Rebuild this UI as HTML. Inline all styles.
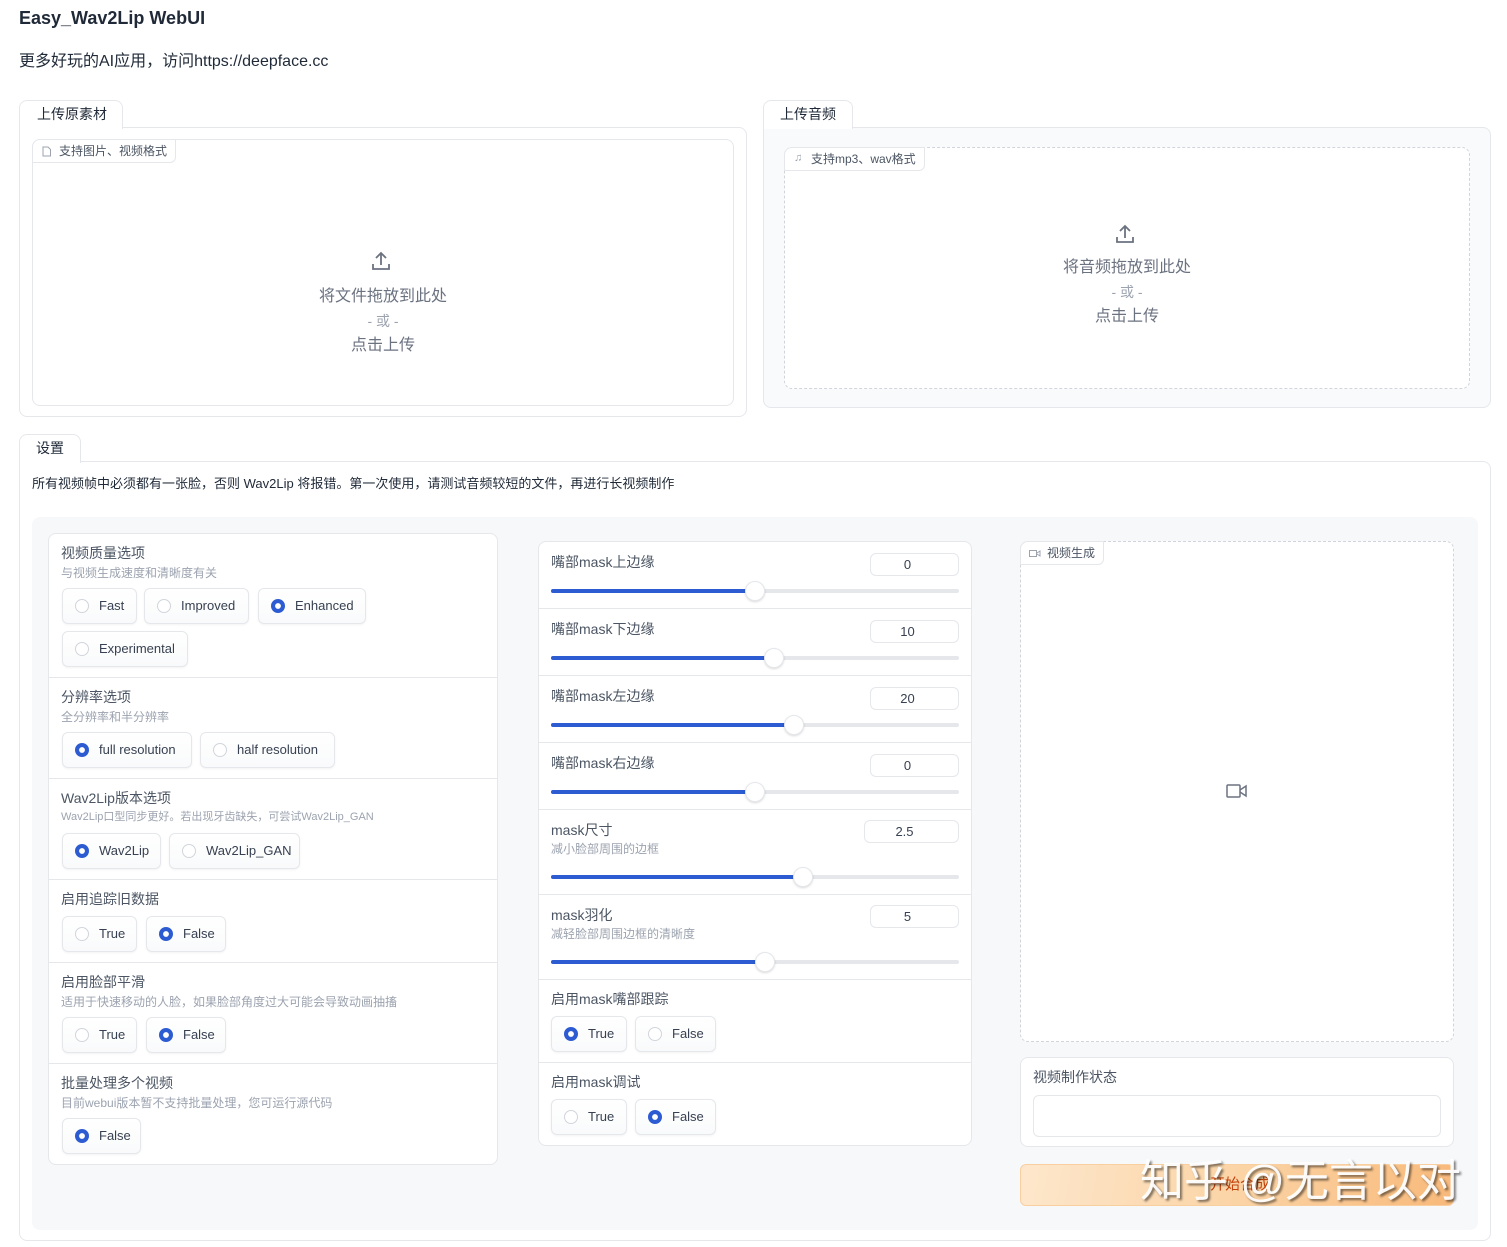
<!DOCTYPE html>
<html><head><meta charset="utf-8"><style>
*{box-sizing:border-box;margin:0;padding:0}
body{width:1507px;height:1247px;background:#fff;position:relative;font-family:"Liberation Sans","Noto Sans CJK SC",sans-serif;color:#374151;overflow:hidden}
.a{position:absolute}
.t{position:absolute;white-space:nowrap;line-height:1}
.box{position:absolute;border:1px solid #e5e7eb;border-radius:8px;background:#fff}
.pill{position:absolute;height:36px;border:1px solid #e5e7eb;border-radius:6px;background:linear-gradient(#fff,#f9fafb);box-shadow:0 1px 2px rgba(0,0,0,.05);font-size:13px;color:#374151;line-height:34px;padding-left:36px;white-space:nowrap}
.pill:before{content:"";position:absolute;left:12px;top:10px;width:14px;height:14px;border-radius:50%;border:1px solid #d1d5db;background:#fff;box-sizing:border-box}
.pill.on:before{background:#2d5bd1;border:4px solid #2d5bd1;box-shadow:inset 0 0 0 3px #fff}
.lab{font-size:14px;color:#4b5563}
.sub{font-size:12px;color:#9ca3af}
.sep{position:absolute;height:1px;background:#e5e7eb}
.num{position:absolute;height:23px;border:1px solid #e5e7eb;border-radius:6px;font-size:13px;text-align:center;line-height:21px;color:#374151;background:#fff;padding-right:14px}
.trk{position:absolute;height:4px;background:#e5e7eb;border-radius:2px}
.fill{position:absolute;left:0;top:0;height:4px;background:#2d5bd1;border-radius:2px}
.th{position:absolute;width:20px;height:20px;border-radius:50%;background:#fff;border:1px solid #e5e7eb;box-shadow:0 1px 2px rgba(0,0,0,.15);top:-8px}
.chip{position:absolute;height:24px;border:1px solid #e5e7eb;border-radius:0 0 6px 0;background:#fff;font-size:12px;color:#4b5563;line-height:22px;padding:0 8px 0 26px;white-space:nowrap}
.up{position:absolute;text-align:center;font-size:16px;color:#6b7280;line-height:24px}
.up .or{color:#9ca3af;font-size:14px}
</style></head><body>

<div class="t" style="left:19px;top:9px;font-size:18px;font-weight:bold;color:#1f2937">Easy_Wav2Lip WebUI</div>
<div class="t" style="left:19px;top:54px;font-size:16px;color:#1f2937">更多好玩的AI应用，访问https://deepface.cc</div>

<div class="box" style="left:19px;top:127px;width:728px;height:290px;border-radius:0 8px 8px 8px"></div>
<div class="a" style="left:19px;top:100px;width:104px;height:29px;border:1px solid #e5e7eb;border-bottom:none;border-radius:8px 8px 0 0;background:#fff"></div>
<div class="t" style="left:37px;top:107px;font-size:14px;color:#1f2937">上传原素材</div>
<div class="box" style="left:32px;top:139px;width:702px;height:267px"></div>
<div class="chip" style="left:32px;top:139px;border-radius:8px 0 6px 0">支持图片、视频格式</div>
<svg class="a" style="left:41px;top:146px" width="11" height="11" viewBox="0 0 11 11"><path d="M2 1h5l2.5 2.5V10H2z" fill="none" stroke="#9ca3af"/></svg>
<svg class="a" style="left:370px;top:250px" width="22" height="22" viewBox="0 0 22 22" fill="none" stroke="#6b7280" stroke-width="1.8"><path d="M11 15V3M6 8l5-5 5 5M3 14v5h16v-5"/></svg>
<div class="up" style="left:283px;top:285px;width:200px">将文件拖放到此处<br><span class="or">- 或 -</span><br>点击上传</div>

<div class="box" style="left:763px;top:127px;width:728px;height:281px;border-radius:0 8px 8px 8px;background:#f9fafb"></div>
<div class="a" style="left:763px;top:100px;width:90px;height:29px;border:1px solid #e5e7eb;border-bottom:none;border-radius:8px 8px 0 0;background:#fff"></div>
<div class="t" style="left:780px;top:107px;font-size:14px;color:#1f2937">上传音频</div>
<div class="a" style="left:784px;top:147px;width:686px;height:242px;border:1px dashed #d1d5db;border-radius:8px;background:#fff"></div>
<div class="chip" style="left:784px;top:147px;border-radius:8px 0 6px 0">支持mp3、wav格式</div>
<div class="t" style="left:794px;top:153px;font-size:11px;color:#9ca3af">♫</div>
<svg class="a" style="left:1114px;top:223px" width="22" height="22" viewBox="0 0 22 22" fill="none" stroke="#6b7280" stroke-width="1.8"><path d="M11 15V3M6 8l5-5 5 5M3 14v5h16v-5"/></svg>
<div class="up" style="left:1027px;top:256px;width:200px">将音频拖放到此处<br><span class="or">- 或 -</span><br>点击上传</div>

<div class="box" style="left:19px;top:461px;width:1472px;height:780px;border-radius:0 8px 8px 8px"></div>
<div class="a" style="left:19px;top:434px;width:62px;height:29px;border:1px solid #e5e7eb;border-bottom:none;border-radius:8px 8px 0 0;background:#fff"></div>
<div class="t" style="left:36px;top:441px;font-size:14px;color:#1f2937">设置</div>
<div class="t" style="left:32px;top:477px;font-size:13px;color:#1f2937">所有视频帧中必须都有一张脸，否则 Wav2Lip 将报错。第一次使用，请测试音频较短的文件，再进行长视频制作</div>
<div class="a" style="left:32px;top:517px;width:1446px;height:713px;background:#f7f8fa;border-radius:8px"></div>

<div class="box" style="left:48px;top:533px;width:450px;height:632px"></div>
<div class="t lab" style="left:61px;top:546px">视频质量选项</div>
<div class="t sub" style="left:61px;top:567px">与视频生成速度和清晰度有关</div>
<div class="pill" style="left:62px;top:588px;width:75px">Fast</div>
<div class="pill" style="left:144px;top:588px;width:105px">Improved</div>
<div class="pill on" style="left:258px;top:588px;width:108px">Enhanced</div>
<div class="pill" style="left:62px;top:631px;width:126px">Experimental</div>
<div class="sep" style="left:49px;top:677px;width:448px"></div>
<div class="t lab" style="left:61px;top:690px">分辨率选项</div>
<div class="t sub" style="left:61px;top:711px">全分辨率和半分辨率</div>
<div class="pill on" style="left:62px;top:732px;width:130px">full resolution</div>
<div class="pill" style="left:200px;top:732px;width:135px">half resolution</div>
<div class="sep" style="left:49px;top:778px;width:448px"></div>
<div class="t lab" style="left:61px;top:791px">Wav2Lip版本选项</div>
<div class="t sub" style="left:61px;top:812px;font-size:11px">Wav2Lip口型同步更好。若出现牙齿缺失，可尝试Wav2Lip_GAN</div>
<div class="pill on" style="left:62px;top:833px;width:99px">Wav2Lip</div>
<div class="pill" style="left:169px;top:833px;width:131px">Wav2Lip_GAN</div>
<div class="sep" style="left:49px;top:879px;width:448px"></div>
<div class="t lab" style="left:61px;top:892px">启用追踪旧数据</div>
<div class="pill" style="left:62px;top:916px;width:75px">True</div>
<div class="pill on" style="left:146px;top:916px;width:80px">False</div>
<div class="sep" style="left:49px;top:962px;width:448px"></div>
<div class="t lab" style="left:61px;top:975px">启用脸部平滑</div>
<div class="t sub" style="left:61px;top:996px">适用于快速移动的人脸，如果脸部角度过大可能会导致动画抽搐</div>
<div class="pill" style="left:62px;top:1017px;width:75px">True</div>
<div class="pill on" style="left:146px;top:1017px;width:80px">False</div>
<div class="sep" style="left:49px;top:1063px;width:448px"></div>
<div class="t lab" style="left:61px;top:1076px">批量处理多个视频</div>
<div class="t sub" style="left:61px;top:1097px">目前webui版本暂不支持批量处理，您可运行源代码</div>
<div class="pill on" style="left:62px;top:1118px;width:79px">False</div>

<div class="box" style="left:538px;top:541px;width:434px;height:605px"></div>
<div class="t lab" style="left:551px;top:555px">嘴部mask上边缘</div>
<div class="num" style="left:870px;top:553px;width:89px">0</div>
<div class="trk" style="left:551px;top:589px;width:408px"><div class="fill" style="width:204px"></div><div class="th" style="left:194px"></div></div>
<div class="sep" style="left:539px;top:608px;width:432px"></div>
<div class="t lab" style="left:551px;top:622px">嘴部mask下边缘</div>
<div class="num" style="left:870px;top:620px;width:89px">10</div>
<div class="trk" style="left:551px;top:656px;width:408px"><div class="fill" style="width:223px"></div><div class="th" style="left:213px"></div></div>
<div class="sep" style="left:539px;top:675px;width:432px"></div>
<div class="t lab" style="left:551px;top:689px">嘴部mask左边缘</div>
<div class="num" style="left:870px;top:687px;width:89px">20</div>
<div class="trk" style="left:551px;top:723px;width:408px"><div class="fill" style="width:243px"></div><div class="th" style="left:233px"></div></div>
<div class="sep" style="left:539px;top:742px;width:432px"></div>
<div class="t lab" style="left:551px;top:756px">嘴部mask右边缘</div>
<div class="num" style="left:870px;top:754px;width:89px">0</div>
<div class="trk" style="left:551px;top:790px;width:408px"><div class="fill" style="width:204px"></div><div class="th" style="left:194px"></div></div>
<div class="sep" style="left:539px;top:809px;width:432px"></div>
<div class="t lab" style="left:551px;top:823px">mask尺寸</div>
<div class="t sub" style="left:551px;top:843px">减小脸部周围的边框</div>
<div class="num" style="left:864px;top:820px;width:95px">2.5</div>
<div class="trk" style="left:551px;top:875px;width:408px"><div class="fill" style="width:252px"></div><div class="th" style="left:242px"></div></div>
<div class="sep" style="left:539px;top:894px;width:432px"></div>
<div class="t lab" style="left:551px;top:908px">mask羽化</div>
<div class="t sub" style="left:551px;top:928px">减轻脸部周围边框的清晰度</div>
<div class="num" style="left:870px;top:905px;width:89px">5</div>
<div class="trk" style="left:551px;top:960px;width:408px"><div class="fill" style="width:214px"></div><div class="th" style="left:204px"></div></div>
<div class="sep" style="left:539px;top:979px;width:432px"></div>
<div class="t lab" style="left:551px;top:992px">启用mask嘴部跟踪</div>
<div class="pill on" style="left:551px;top:1016px;width:76px">True</div>
<div class="pill" style="left:635px;top:1016px;width:81px">False</div>
<div class="sep" style="left:539px;top:1062px;width:432px"></div>
<div class="t lab" style="left:551px;top:1075px">启用mask调试</div>
<div class="pill" style="left:551px;top:1099px;width:76px">True</div>
<div class="pill on" style="left:635px;top:1099px;width:81px">False</div>

<div class="a" style="left:1020px;top:541px;width:434px;height:501px;border:1px dashed #d1d5db;border-radius:8px;background:#fff"></div>
<div class="chip" style="left:1020px;top:541px;border-radius:8px 0 6px 0">视频生成</div>
<svg class="a" style="left:1029px;top:549px" width="12" height="9" viewBox="0 0 12 9" fill="none" stroke="#9ca3af"><rect x="0.5" y="1.5" width="7" height="6"/><path d="M8 4l3-2v5l-3-2"/></svg>
<svg class="a" style="left:1226px;top:783px" width="22" height="16" viewBox="0 0 22 16" fill="none" stroke="#6b7280" stroke-width="1.5"><rect x="1" y="2" width="13" height="12" rx="1"/><path d="M14 7l6-4v10l-6-4"/></svg>
<div class="box" style="left:1020px;top:1057px;width:434px;height:90px"></div>
<div class="t lab" style="left:1033px;top:1070px">视频制作状态</div>
<div class="a" style="left:1033px;top:1095px;width:408px;height:42px;border:1px solid #e5e7eb;border-radius:6px;background:#fff"></div>
<div class="a" style="left:1020px;top:1164px;width:434px;height:42px;border-radius:6px;background:linear-gradient(100deg,#fde7cc 0%,#fbd4a6 50%,#f8b97a 100%);border:1px solid #f9cfa0"></div>
<div class="t" style="left:1210px;top:1177px;font-size:15px;color:#c2410c">开始合成</div>
<div class="t" style="left:1140px;top:1160px;font-size:44px;color:rgba(255,255,255,.95);text-shadow:2px 2px 2px rgba(0,0,0,.5)">知乎 @无言以对</div>

</body></html>
